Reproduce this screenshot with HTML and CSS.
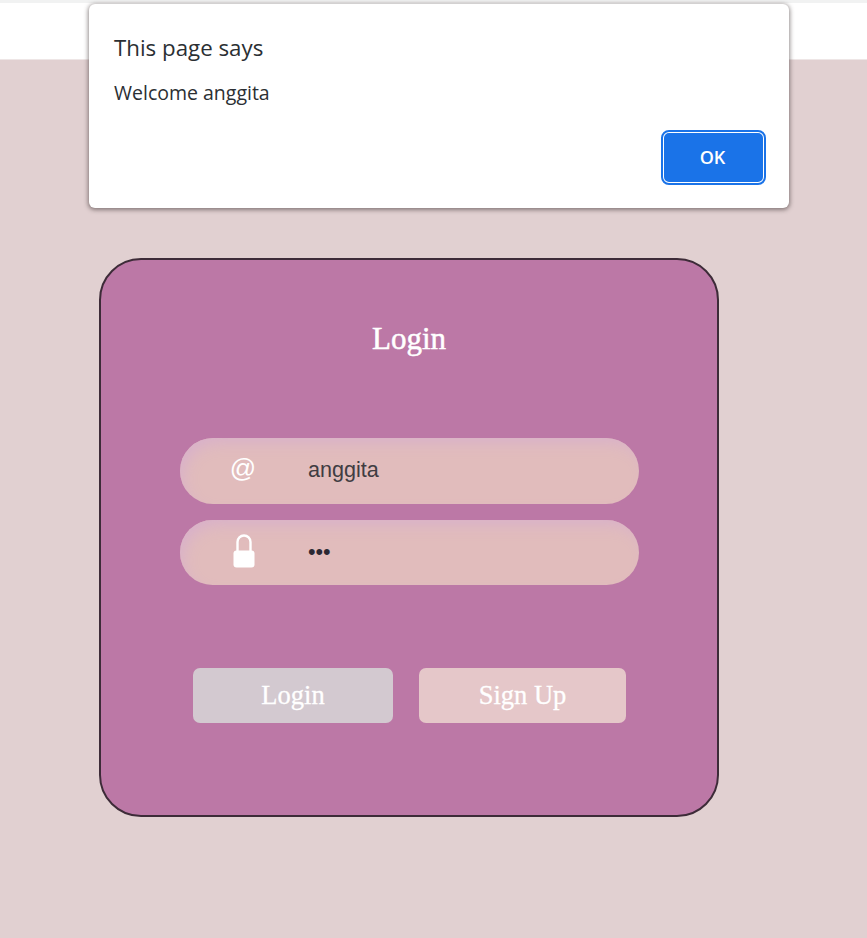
FILE: index.html
```html
<!DOCTYPE html>
<html>
<head>
	<title>Login</title>
	<link rel="stylesheet" href="styles.css">
</head>
<body>
	<div class="topbar"></div>
	<div class="page">
		<div class="card">
			<h2 class="title">Login</h2>
			<div class="fields">
				<div class="field">
					<span class="icon at">@</span>
					<input class="inp" type="text" value="anggita">
				</div>
				<div class="field">
					<span class="icon">
						<svg class="lock" width="24" height="36" viewBox="0 0 24 36">
							<path d="M5.5 20V9a6.5 6.5 0 0 1 13 0V20" fill="none" stroke="#fff" stroke-width="2.4"/>
							<rect x="1.5" y="17.5" width="21" height="17" rx="3" fill="#fff"/>
						</svg>
					</span>
					<input class="inp pw" type="password" value="abc">
				</div>
			</div>
			<div class="btns">
				<button class="btn btn-login">Login</button>
				<button class="btn btn-signup">Sign Up</button>
			</div>
		</div>
	</div>

	<div class="dialog">
		<div class="dlg-title">This page says</div>
		<div class="dlg-msg">Welcome anggita</div>
		<div class="dlg-foot">
			<button class="ok">OK</button>
		</div>
	</div>
</body>
</html>
```

FILE: styles.css
```css
html, body{
	margin:0;
	padding:0;
}
body{
	width:867px;
	height:938px;
	overflow:hidden;
	background-color:#e1d0d1;
	position:relative;
}
.topbar{
	height:56px;
	background-color:#fff;
	border-top:3px solid #f1f2f2;
	border-bottom:1px solid #eee6e6;
}
.page{
	padding:198px 0 0 99px;
}
.card{
	box-sizing:border-box;
	width:620px;
	height:559px;
	padding:62px 79px 0 79px;
	background-color:#bc78a6;
	border:2px solid #3d2b38;
	border-radius:42px;
}
.title{
	margin:0;
	height:38px;
	line-height:34px;
	text-align:center;
	font-family:"Liberation Serif",serif;
	font-size:31px;
	font-weight:normal;
	color:#fff;
	-webkit-text-stroke:0.5px #fff;
}
.fields{
	display:flex;
	flex-direction:column;
	gap:16px;
	margin-top:78px;
}
.field{
	display:flex;
	align-items:center;
	width:459px;
	height:65.5px;
	border-radius:33px;
	background-color:#e1bcbc;
	box-shadow:inset 6px 8px 16px -4px #d8b0cb;
}
.icon{
	display:flex;
	justify-content:center;
	width:126px;
	margin-right:2px;
	color:#fff;
}
.at{
	font-family:"Liberation Sans",sans-serif;
	font-size:26px;
	position:relative;
	top:-2px;
}
.lock{
	position:relative;
	left:1px;
	top:-1px;
}
.inp{
	flex:1;
	min-width:0;
	margin-right:20px;
	padding:0;
	border:0;
	outline:0;
	background:transparent;
	font-family:"Liberation Sans",sans-serif;
	font-size:21.6px;
	color:#403c42;
	position:relative;
	top:-1px;
}
.pw{
	top:0;
	color:#2b2833;
}
.btns{
	display:flex;
	gap:26px;
	margin-top:83px;
	padding-left:13px;
}
.btn{
	height:55px;
	padding:0;
	border:0;
	border-radius:7px;
	font-family:"Liberation Serif",serif;
	font-size:26.5px;
	color:#fff;
	-webkit-text-stroke:0.3px #fff;
}
.btn-login{
	width:200px;
	background-color:#d3c9d0;
}
.btn-signup{
	width:207px;
	background-color:#e5c7c9;
}

/* alert box sits over the page */
.dialog{
	box-sizing:border-box;
	position:absolute;
	left:89px;
	top:4px;
	width:700px;
	height:204px;
	padding:30px 24px 0 25px;
	background-color:#fff;
	border-radius:6px;
	box-shadow:0 1px 4px 1px rgba(60,50,50,0.55);
	font-family:"Open Sans",sans-serif;
	color:#2b2f33;
}
.dlg-title{
	font-size:22.3px;
	line-height:28px;
}
.dlg-msg{
	margin-top:19px;
	font-size:19.5px;
	line-height:24px;
}
.dlg-foot{
	display:flex;
	justify-content:flex-end;
	margin-top:26px;
}
.ok{
	box-sizing:border-box;
	width:103px;
	height:53px;
	padding:0 2px 2px 0;
	background-color:#1a73e8;
	border:2px solid #fff;
	outline:2px solid #1a73e8;
	outline-offset:-1px;
	border-radius:7px;
	font-family:"Open Sans",sans-serif;
	font-size:18px;
	font-weight:600;
	color:#fff;
}
```
